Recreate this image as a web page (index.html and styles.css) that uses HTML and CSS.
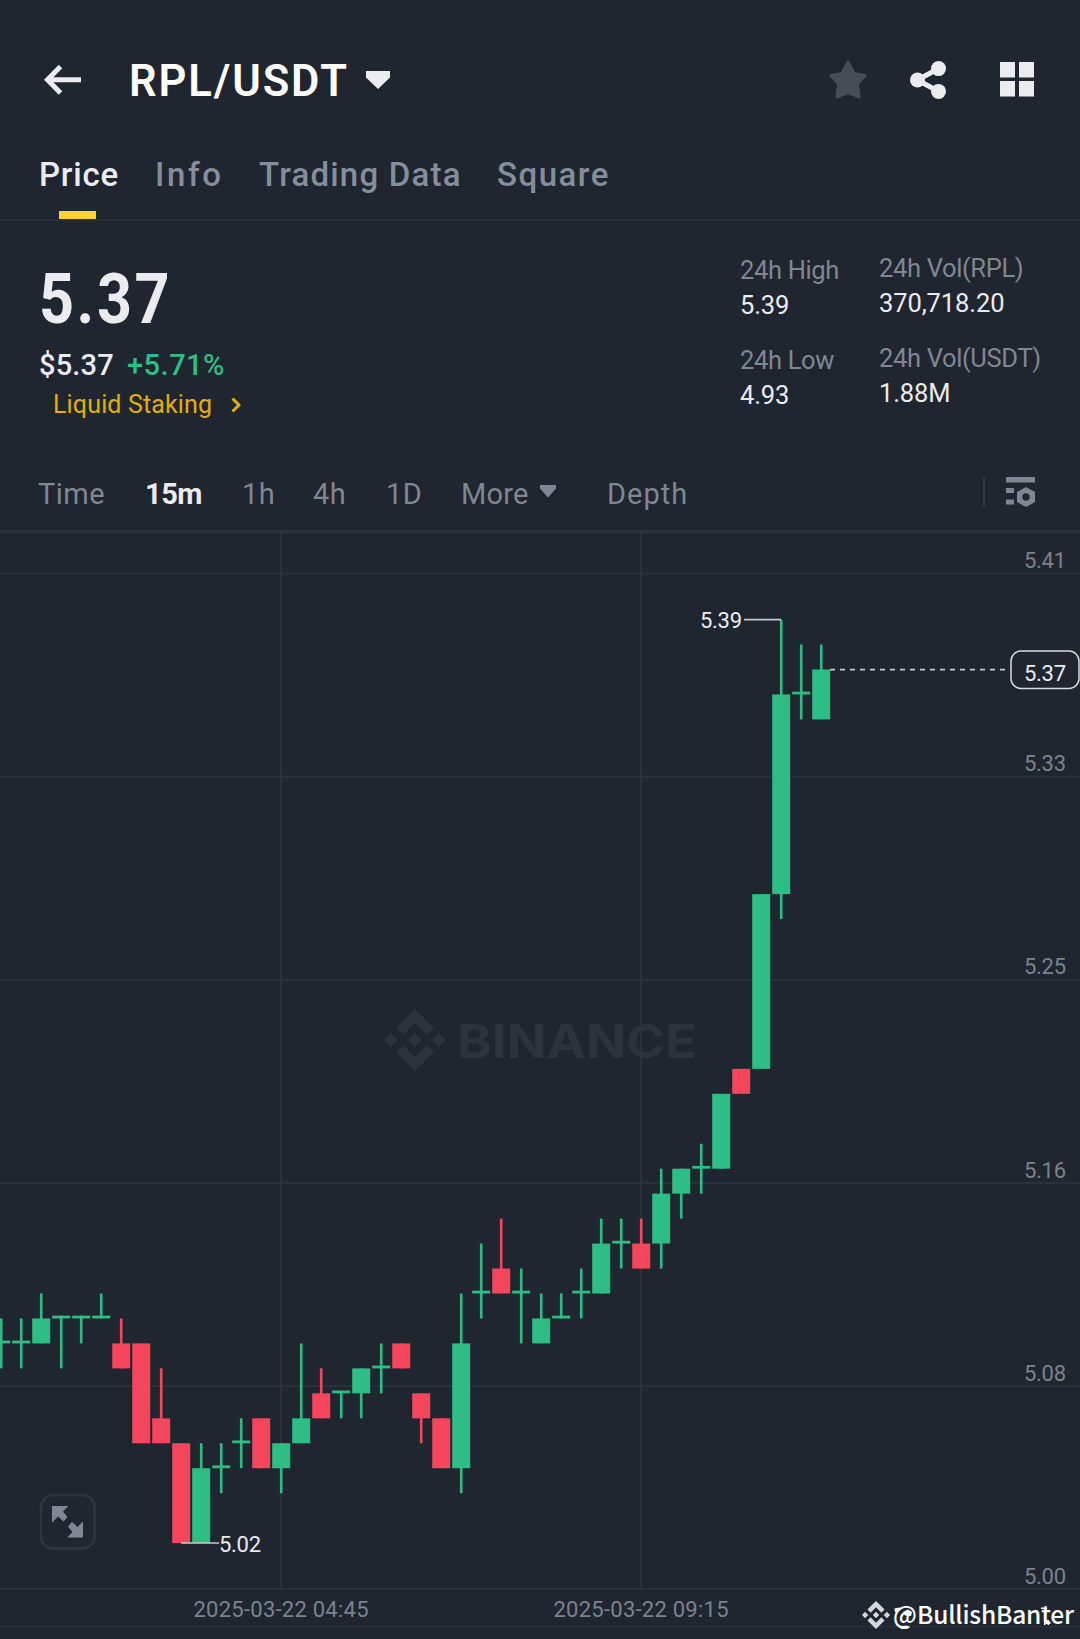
FILE: index.html
```html
<!DOCTYPE html>
<html lang="en">

<head>
    <meta charset="UTF-8">
    <meta name="viewport" content="width=device-width, initial-scale=1.0">
    <title>RPL/USDT</title>
    <link rel="stylesheet" href="styles.css">
</head>

<body>
    <!-- Header -->
    <header>
        <svg class="back" width="38" height="32" viewBox="0 0 38 32">
            <path d="M37 15.700H4M16.500 2.500L3.500 15.700L16.500 29" fill="none" stroke="#eaecef" stroke-width="5" />
        </svg>
        <h1>RPL/USDT</h1>
        <svg class="caret" width="24" height="18" viewBox="0 0 24 18">
            <path d="M0 0H24V6.500L12 18L0 6.500Z" fill="#eaecef" />
        </svg>
        <div class="actions">
            <svg width="38" height="40" viewBox="0 0 38 40">
                <path d="M19 2L25 13.500L36 15.500L28.300 24L30.200 37L19 32.500L7.800 37L9.700 24L2 15.500L13 13.500Z" fill="#474d57" stroke="#474d57" stroke-width="3" stroke-linejoin="round" />
            </svg>
            <svg width="36" height="38" viewBox="0 0 36 38">
                <path d="M28.500 7.500L7.500 19L28.500 30.500" fill="none" stroke="#eaecef" stroke-width="5" />
                <circle cx="28.500" cy="7.600" r="7.500" fill="#eaecef" />
                <circle cx="7.500" cy="19" r="7.500" fill="#eaecef" />
                <circle cx="28.500" cy="30.400" r="7.500" fill="#eaecef" />
            </svg>
            <svg width="34" height="35" viewBox="0 0 34 35">
                <path d="M0 0H15V15.500H0ZM19 0H34V15.500H19ZM0 19H15V34.500H0ZM19 19H34V34.500H19Z" fill="#eaecef" />
            </svg>
        </div>
    </header>

    <!-- Tabs -->
    <nav class="tabs">
        <a class="tab active">Price</a>
        <a class="tab info">Info</a>
        <a class="tab trading">Trading Data</a>
        <a class="tab square">Square</a>
    </nav>

    <!-- Ticker -->
    <section class="ticker">
        <div class="price">
            <div class="last">5.37</div>
            <div class="change"><span class="usd">$5.37</span><span class="up">+5.71%</span></div>
            <div class="tag">
                <span>Liquid Staking</span>
                <svg width="10" height="16" viewBox="0 0 10 16">
                    <path d="M1.500 1.500L8 8L1.500 14.500" fill="none" stroke="#e3ae0b" stroke-width="3" />
                </svg>
            </div>
        </div>
        <div class="stats">
            <div class="stat-col">
                <div class="label">24h High</div>
                <div class="value">5.39</div>
                <div class="label">24h Low</div>
                <div class="value">4.93</div>
            </div>
            <div class="stat-col vol">
                <div class="label">24h Vol(RPL)</div>
                <div class="value">370,718.20</div>
                <div class="label">24h Vol(USDT)</div>
                <div class="value">1.88M</div>
            </div>
        </div>
    </section>

    <!-- Intervals -->
    <nav class="intervals">
        <span class="time">Time</span>
        <span class="m15">15m</span>
        <span class="h1">1h</span>
        <span class="h4">4h</span>
        <span class="d1">1D</span>
        <span class="more">More</span>
        <svg class="more-caret" width="16" height="13" viewBox="0 0 16 13">
            <path d="M0 0H16V3.500L8 12.500L0 3.500Z" fill="#7f8792" />
        </svg>
        <span class="depth">Depth</span>
        <div class="settings">
            <svg width="29" height="30" viewBox="0 0 29 30">
                <path d="M0 0H29V5.500H0ZM0 11H8V16H0ZM0 22.500H8V27.500H0Z" fill="#7f8792" />
                <path d="M20 10L29 15V25L20 30L11 25V15Z" fill="#7f8792" />
                <circle cx="20" cy="20" r="3.700" fill="#202630" />
            </svg>
        </div>
    </nav>

    <!-- Chart -->
    <main class="chart">
        <svg id="chart" width="1080" height="1106" viewBox="0 533 1080 1106">
            <g id="grid"></g>
            <g class="brand">
                <g transform="translate(384 1009) scale(2.583)">
                    <use href="#mark" />
                </g>
                <text x="457" y="1057.500" textLength="240" lengthAdjust="spacingAndGlyphs">BINANCE</text>
            </g>
            <g id="candles"></g>

            <path class="marker" d="M744 619.700H781M181 1543H219" />
            <text class="extreme" x="700" y="628" textLength="42">5.39</text>
            <text class="extreme" x="219" y="1552" textLength="42">5.02</text>

            <path class="last-line" d="M830 669.700H1010" />
            <rect class="last-box" x="1011" y="651" width="68" height="37.500" rx="10" />
            <text class="extreme" x="1024" y="681" textLength="42">5.37</text>

            <rect class="expand-box" x="41" y="1495" width="53.500" height="53.500" rx="12" />
            <path class="expand" d="M52 1506H68.500L63 1511.500L67.500 1517L63.500 1521.500L58 1516.500L52 1522.500ZM83 1537.500H67L72.500 1532L68 1526.500L72 1522L77.500 1527L83 1521.500Z" />

            <g class="author">
                <g transform="translate(862 1601) scale(1.167)">
                    <use href="#mark" />
                </g>
                <text class="at" x="893" y="1624" textLength="22">@</text>
                <path class="avatar" d="M894.500 1608.500L899 1607.500L901 1609.500L897 1613L895 1612ZM903 1612L908 1609.500L912 1612L911 1616L905 1615.500ZM897 1624L902 1626L907 1625.500L908 1629L901 1628.500Z" />
                <text x="917" y="1623.500" textLength="157">BullishBanter</text>
                <path class="avatar" d="M1041 1607.500H1047V1609H1041ZM1044 1620H1049V1625H1047.500V1622H1045.500V1625H1044Z" />
            </g>

            <defs>
                <path id="mark" d="M12 0L19.300 7.300L16.600 10L12 5.400L7.400 10L4.700 7.300ZM2.700 9.300L5.400 12L2.700 14.700L0 12ZM21.300 9.300L24 12L21.300 14.700L18.600 12ZM12 9.300L14.700 12L12 14.700L9.300 12ZM7.400 14L12 18.600L16.600 14L19.300 16.700L12 24L4.700 16.700Z" />
            </defs>
        </svg>
    </main>

    <script src="chart.js"></script>
</body>

</html>
```

FILE: styles.css
```css
body {
    margin: 0;
    width: 1080px;
    height: 1639px;
    overflow: hidden;
    background-color: #202630;
    color: #eaecef;
    font-family: Roboto, "Noto Sans", sans-serif;
}

svg {
    display: block;
    flex: none;
}

header {
    display: flex;
    align-items: center;
    height: 160px;
    padding: 0 46px 0 44px;
    box-sizing: border-box;
}

h1 {
    margin: 3px 0 0 47px;
    width: 217px;
    font-size: 43.5px;
    font-weight: 600;
    color: #ffffff;
    white-space: nowrap;
    letter-spacing: 1.9px;
}

.caret {
    margin-left: 20px;
}

.actions {
    display: flex;
    align-items: center;
    margin: -1px 0 0 auto;
}

.actions svg + svg {
    margin-left: 43px;
}

.actions svg:last-child {
    margin-left: 54px;
}

.tabs {
    display: flex;
    height: 59px;
    padding-left: 39px;
    border-bottom: 2px solid #2a3039;
    font-size: 33px;
    font-weight: 500;
    line-height: 30px;
    letter-spacing: 1.2px;
    color: #848e9c;
    white-space: nowrap;
}

.tab {
    width: 78px;
    margin-right: 38px;
}

.tab.active {
    color: #eaecef;
    letter-spacing: 0.8px;
}

.tab.active::after {
    content: "";
    display: block;
    width: 37px;
    height: 8px;
    margin: 21px 0 0 20px;
    background-color: #fcd535;
}

.tab.info {
    width: 66px;
    letter-spacing: 2.6px;
}

.tab.trading {
    width: 200px;
}

.square {
    letter-spacing: 1.5px;
}

.ticker {
    display: flex;
    justify-content: space-between;
    height: 235px;
    padding: 0 35px 0 39px;
}

.last {
    margin-top: 36px;
    font-size: 71px;
    font-weight: 700;
    line-height: 84px;
    letter-spacing: 3px;
    transform: scaleX(0.86);
    transform-origin: left;
}

.change {
    display: flex;
    gap: 13px;
    font-size: 29px;
    font-weight: 500;
    line-height: 34px;
    margin-top: 7px;
}

.usd {
    letter-spacing: 0.2px;
}

.up {
    letter-spacing: 0.5px;
    color: #2ebd85;
}

.tag {
    display: flex;
    align-items: center;
    margin: 7px 0 0 14px;
    font-size: 25px;
    line-height: 32px;
    letter-spacing: 0.15px;
    color: #e3ae0b;
}

.tag svg {
    margin-left: 19px;
}

.stats {
    display: flex;
    padding-top: 32px;
    white-space: nowrap;
}

.stat-col {
    width: 139px;
    padding-top: 2px;
}

.stat-col.vol {
    width: 166px;
    padding-top: 0;
}

.label,
.value {
    height: 35px;
    font-size: 25.5px;
    line-height: 30px;
}

.label {
    letter-spacing: -0.35px;
    color: #7f8792;
}

.value {
    height: 55px;
    letter-spacing: -0.1px;
}

.intervals {
    display: flex;
    height: 74px;
    padding-left: 38px;
    border-bottom: 3px solid #2a3039;
    font-size: 29px;
    line-height: 76px;
    letter-spacing: 0.5px;
    color: #7f8792;
    white-space: nowrap;
}

.time {
    width: 107px;
}

.m15 {
    width: 97px;
    font-weight: 700;
    letter-spacing: -0.5px;
    color: #eaecef;
}

.h1 {
    width: 71px;
}

.h4 {
    width: 73px;
}

.d1 {
    width: 75px;
}

.more {
    width: 79px;
    letter-spacing: 0.2px;
}

.more-caret {
    margin-top: 29px;
}

.depth {
    margin-left: 51px;
    letter-spacing: 1px;
}

.settings {
    height: 30px;
    margin: 21px 45px 0 auto;
    padding-left: 21px;
    border-left: 2px solid #323843;
}

.chart {
    height: 1106px;
}

.grid-line {
    stroke: #2b313a;
    stroke-width: 2;
}

.axis {
    fill: #7b838f;
    font-size: 22px;
}

.extreme {
    fill: #eaecef;
    font-size: 22px;
}

.brand {
    fill: #2d333d;
    font-family: Inter, sans-serif;
    font-size: 47px;
    font-weight: 700;
}

.up-candle {
    fill: #2ebd85;
}

.down-candle {
    fill: #f6465d;
}

.marker {
    stroke: #c3c8d0;
    stroke-width: 1.7;
}

.last-line {
    stroke: #c3c8d0;
    stroke-width: 1.7;
    stroke-dasharray: 5 5;
}

.last-box {
    fill: #202630;
    stroke: #d5d9df;
    stroke-width: 1.5;
}

.expand-box {
    fill: none;
    stroke: #2f3640;
    stroke-width: 2.5;
}

.expand {
    fill: #7f8792;
}

.author {
    fill: #d6d8db;
    font-family: "Noto Sans CJK SC", sans-serif;
    font-size: 24.5px;
    font-weight: 500;
}

.author text,
.avatar {
    fill: #ffffff;
}
```

FILE: chart.js
```js
const NS = "http://www.w3.org/2000/svg";

// [open, close, high, low] in cents above 5.00
const candles = [
    [10, 10, 11, 9], [10, 10, 11, 9], [10, 11, 12, 10], [11, 11, 11, 9], [11, 11, 11, 10], [11, 11, 12, 11],
    [10, 9, 11, 9], [10, 6, 10, 6], [7, 6, 9, 6], [6, 2, 6, 2], [2, 5, 6, 2], [5, 5, 6, 4],
    [6, 6, 7, 5], [7, 5, 7, 5], [5, 6, 6, 4], [6, 7, 10, 6], [8, 7, 9, 7], [8, 8, 8, 7],
    [8, 9, 9, 7], [9, 9, 10, 8], [10, 9, 10, 9], [8, 7, 8, 6], [7, 5, 7, 5], [5, 10, 12, 4],
    [12, 12, 14, 11], [13, 12, 15, 12], [12, 12, 13, 10], [10, 11, 12, 10], [11, 11, 12, 11], [12, 12, 13, 11],
    [12, 14, 15, 12], [14, 14, 15, 13], [14, 13, 15, 13], [14, 16, 17, 13], [16, 17, 17, 15], [17, 17, 18, 16],
    [17, 20, 20, 17], [21, 20, 21, 20], [21, 28, 28, 21], [28, 36, 39, 27], [36, 36, 38, 35], [35, 37, 38, 35]
];

const y = cents => 669.5 + (37 - cents) * 24.96;

function add(parent, tag, attrs, text) {
    const el = document.createElementNS(NS, tag);
    for (const key in attrs) el.setAttribute(key, attrs[key]);
    if (text) el.textContent = text;
    document.getElementById(parent).appendChild(el);
}

function line(x1, y1, x2, y2) {
    add("grid", "line", { class: "grid-line", x1, y1, x2, y2 });
}

// Grid and axis labels
["5.41", "5.33", "5.25", "5.16", "5.08", "5.00"].forEach((label, i) => {
    const top = 573.6 + i * 203.1;
    line(0, top, 1080, top);
    add("grid", "text", { class: "axis", x: 1024, y: top - 5.4, textLength: 42 }, label);
});
line(0, 1626.5, 1080, 1626.5);

[[281, "2025-03-22 04:45"], [641, "2025-03-22 09:15"]].forEach(([x, label]) => {
    line(x, 533, x, 1589);
    add("grid", "text", { class: "axis", x: x - 87.5, y: 1617, textLength: 175 }, label);
});

// Candles
candles.forEach(([open, close, high, low], i) => {
    const x = 1.2 + i * 20;
    const cls = close < open ? "down-candle" : "up-candle";
    const top = open === close ? y(open) - 2.8 : y(Math.max(open, close));
    const bottom = y(Math.min(open, close));
    const wickTop = Math.min(y(high), top);
    add("candles", "rect", { class: cls, x: x - 1.3, y: wickTop, width: 2.6, height: y(low) - wickTop });
    add("candles", "rect", { class: cls, x: x - 9, y: top, width: 18, height: bottom - top });
});
```
